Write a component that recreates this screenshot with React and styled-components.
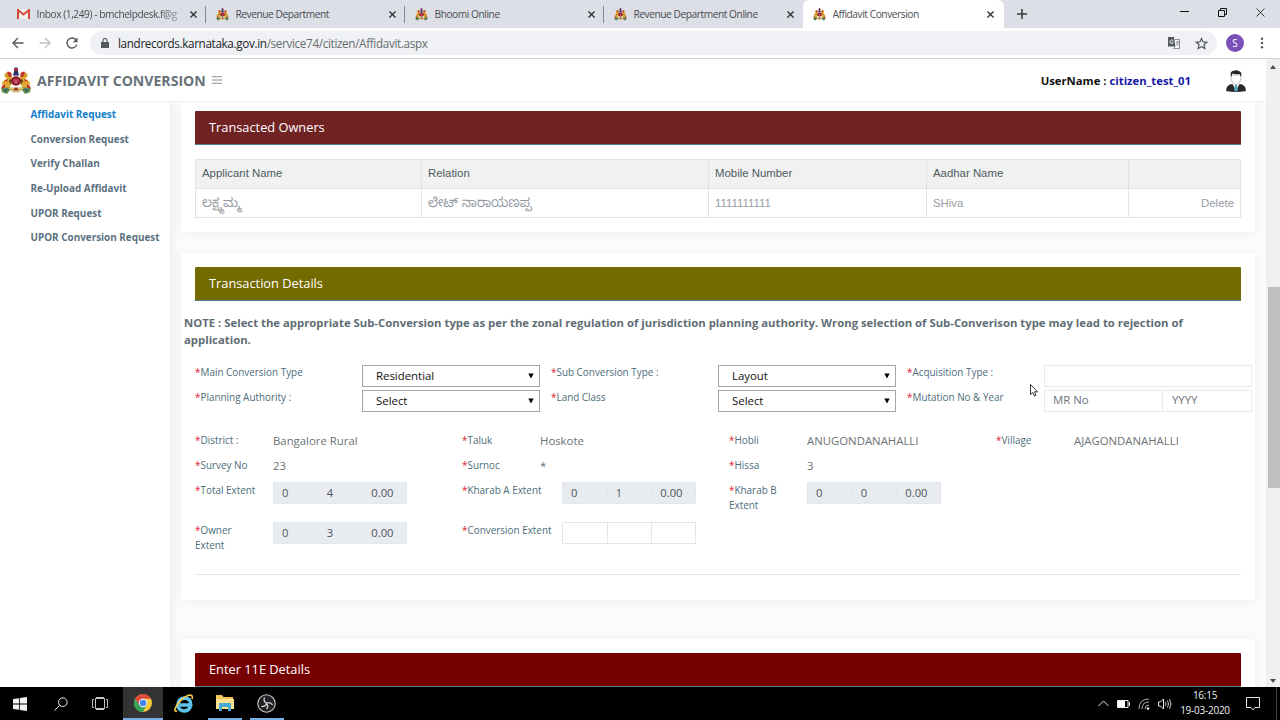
import styled, { createGlobalStyle } from "styled-components";

const GlobalStyle = createGlobalStyle`
  * {
    box-sizing: border-box;
  }
  body {
    margin: 0;
    overflow: hidden;
    font-family: "Open Sans", "Noto Sans", sans-serif;
  }
`;

const tabs = [
  { title: "Inbox (1,249) - bmchelpdesk.f@g", icon: "mail", fade: true },
  { title: "Revenue Department" },
  { title: "Bhoomi Online" },
  { title: "Revenue Department Online", last: true },
  { title: "Affidavit Conversion", active: true },
];

const menu = [
  "Affidavit Request",
  "Conversion Request",
  "Verify Challan",
  "Re-Upload Affidavit",
  "UPOR Request",
  "UPOR Conversion Request",
];

function Emblem({ width, height }) {
  return (
    <svg width={width} height={height} viewBox="0 0 32 30" preserveAspectRatio="none">
      <path d="M1 22L6 20L16 24L26 20L31 22L30 27L25 29L22 25L10 25L7 29L2 27Z" fill="#6b8a4e" />
      <path d="M3 24L8 23L6 27ZM29 24L24 23L26 27Z" fill="#1d6f6c" />
      <path d="M6 6L4 9L7 13L3 15L1 19L5 18L4 22L9 22L12 18L12 11L9 6Z" fill="#dfa92f" />
      <path d="M26 6L28 9L25 13L29 15L31 19L27 18L28 22L23 22L20 18L20 11L23 6Z" fill="#dfa92f" />
      <path d="M7 5L10 5L12 8L11 11L8 10ZM4 14L8 13L7 16ZM2 20L5 18L5 22L2 23Z" fill="#c23a2c" />
      <path d="M25 5L22 5L20 8L21 11L24 10ZM28 14L24 13L25 16ZM30 20L27 18L27 22L30 23Z" fill="#c23a2c" />
      <path d="M11 12L9 15L11 19ZM21 12L23 15L21 19Z" fill="#4a4420" />
      <circle cx="16" cy="15" r="5" fill="#8f1a2e" />
      <path d="M13.5 13H18.5V16L16 19L13.5 16Z" fill="#c64c5f" />
      <path d="M14 2L16 0L18 2V5L19 9H13L14 5Z" fill="#2a3260" />
      <path d="M14 1.5H18V4H14Z" fill="#b9322f" />
      <path d="M9 22H14L16 23L18 22H23V24H9Z" fill="#ecc75c" />
      <path d="M12 25H20V27H12Z" fill="#d5b06a" />
      <path d="M14 22H18V25H14Z" fill="#9c3a31" />
    </svg>
  );
}

function MailIcon() {
  return (
    <svg width="13" height="10" viewBox="0 0 13 10">
      <path d="M0 1Q0 0 1 0H12Q13 0 13 1V10H0Z" fill="#f1eeee" />
      <path d="M1 10V1L6.5 5.5L12 1V10" fill="none" stroke="#d5483b" strokeWidth="2" />
    </svg>
  );
}

function Cross({ size = 7, color = "#2d3035", weight = 1.5 }) {
  return (
    <svg width={size} height={size} viewBox="0 0 8 8">
      <path d="M.5 .5L7.5 7.5M7.5 .5L.5 7.5" stroke={color} strokeWidth={weight} />
    </svg>
  );
}

function Browser() {
  return (
    <>
      <TabStrip>
        {tabs.map((tab) => (
          <Tab key={tab.title} $active={tab.active} $line={!tab.active && !tab.last}>
            {tab.icon ? <MailIcon /> : <Emblem width={13} height={13} />}
            <TabTitle $fade={tab.fade}>{tab.title}</TabTitle>
            <Cross />
          </Tab>
        ))}
        <NewTab>
          <svg width="10" height="10" viewBox="0 0 10 10">
            <path d="M5 0V10M0 5H10" stroke="#34373b" strokeWidth="1.5" />
          </svg>
        </NewTab>
        <WindowButtons>
          <svg width="9" height="9" viewBox="0 0 9 9">
            <path d="M0 3.5H9" stroke="#111" />
          </svg>
          <svg width="9" height="9" viewBox="0 0 9 9">
            <path d="M.5 2.5H6.5V8.5H.5ZM2.5 2V.5H8.5V6.5H7" fill="none" stroke="#111" />
          </svg>
          <Cross size={9} color="#222" weight={0.8} />
        </WindowButtons>
      </TabStrip>
      <Toolbar>
        <NavIcons>
          <svg width="12" height="12" viewBox="0 0 12 12">
            <path d="M11.5 6H1.5M6 1L1 6L6 11" fill="none" stroke="#55585d" strokeWidth="1.4" />
          </svg>
          <svg width="12" height="12" viewBox="0 0 12 12">
            <path d="M.5 6H10.5M6 1L11 6L6 11" fill="none" stroke="#bfc1c4" strokeWidth="1.4" />
          </svg>
          <svg width="12" height="12" viewBox="0 0 12 12">
            <path d="M10.2 3.2A5 5 0 1 0 10.8 7.6" fill="none" stroke="#55585d" strokeWidth="1.4" />
            <path d="M11.5 .3V5.2H6.8Z" fill="#55585d" />
          </svg>
        </NavIcons>
        <AddressBar>
          <svg width="8" height="10" viewBox="0 0 8 10">
            <path d="M0 4H8V10H0Z" fill="#55585d" />
            <path d="M2 4V2.5A2 2 0 0 1 6 2.5V4" fill="none" stroke="#55585d" strokeWidth="1.1" />
          </svg>
          <Url>
            landrecords.karnataka.gov.in<span>/service74/citizen/Affidavit.aspx</span>
          </Url>
          <svg width="12" height="12" viewBox="0 0 12 12">
            <path d="M0 0H6L7.5 9.5H0Z" fill="#55585d" />
            <path d="M7 2.5H11.5V11.5H5.5L7.5 9.5" fill="#f6f7f8" stroke="#74777b" strokeWidth=".8" />
            <path d="M5 3.5A1.8 1.8 0 1 0 5 6V5H3.5" fill="none" stroke="#fff" strokeWidth=".8" />
            <path d="M8 5H11M9.5 4V5M10.5 5Q10 7 8 8.5M8.5 6L10.5 8.5" fill="none" stroke="#74777b" strokeWidth=".7" />
          </svg>
          <svg width="13" height="13" viewBox="0 0 24 24">
            <path
              d="M12 2.5L14.8 9L22 9.6L16.5 14.3L18.2 21.3L12 17.6L5.8 21.3L7.5 14.3L2 9.6L9.2 9Z"
              fill="none"
              stroke="#4b4e53"
              strokeWidth="2"
            />
          </svg>
        </AddressBar>
        <Avatar>S</Avatar>
        <svg width="4" height="12" viewBox="0 0 4 12">
          <circle cx="2" cy="1.7" r="1.2" fill="#55585d" />
          <circle cx="2" cy="6" r="1.2" fill="#55585d" />
          <circle cx="2" cy="10.3" r="1.2" fill="#55585d" />
        </svg>
      </Toolbar>
    </>
  );
}

function SiteHeader() {
  return (
    <Header>
      <Emblem width={32} height={28} />
      <Brand>AFFIDAVIT CONVERSION</Brand>
      <MenuIcon width="10" height="8" viewBox="0 0 10 8">
        <path d="M0 .7H10M0 4H10M0 7.3H10" stroke="#7c8b92" strokeWidth=".9" />
      </MenuIcon>
      <UserName>
        UserName : <span>citizen_test_01</span>
      </UserName>
      <svg width="20" height="22" viewBox="0 0 20 22">
        <path d="M0 21Q0 15 6 14L10 16L14 14Q20 15 20 21Q10 23 0 21Z" fill="#29292b" />
        <path d="M6.5 13.5L10 21.5L13.5 13.5Z" fill="#fff" />
        <path d="M9 15H11L12 20L10 22L8 20Z" fill="#4ea3b5" />
        <path d="M5.2 5V8.5Q6 14 10 14.5Q14 14 14.8 8.5V5Z" fill="#fff" stroke="#888" strokeWidth=".5" />
        <path d="M5 7Q3.5 1 8 .8Q10 -.6 13 1Q16.5 2 15 7L13.8 4Q9 4.5 6.5 3.6Z" fill="#222" />
      </svg>
    </Header>
  );
}

function Label({ children, nowrap }) {
  return (
    <LabelText $nowrap={nowrap}>
      <i>*</i>
      {children}
    </LabelText>
  );
}

function Extent({ values = ["", "", ""], disabled }) {
  return (
    <ExtentGroup>
      {values.map((value, index) => (
        <ExtentBox key={index} $disabled={disabled}>
          {value}
        </ExtentBox>
      ))}
    </ExtentGroup>
  );
}

function Select({ children }) {
  return (
    <SelectBox>
      {children}
      <svg width="6" height="6" viewBox="0 0 6 6">
        <path d="M.3 .5H5.7L3 5.5Z" fill="#000" />
      </svg>
    </SelectBox>
  );
}

function Owners() {
  return (
    <Card $height={130} $top={9}>
      <Bar $color="#712324">Transacted Owners</Bar>
      <Table>
        <thead>
          <tr>
            <th>Applicant Name</th>
            <th>Relation</th>
            <th>Mobile Number</th>
            <th>Aadhar Name</th>
            <th></th>
          </tr>
        </thead>
        <tbody>
          <tr>
            <Kannada>ಲಕ್ಷ್ಮಮ್ಮ</Kannada>
            <Kannada>ಲೇಟ್ ನಾರಾಯಣಪ್ಪ</Kannada>
            <td>1111111111</td>
            <td>SHiva</td>
            <td>Delete</td>
          </tr>
        </tbody>
      </Table>
    </Card>
  );
}

function Transaction() {
  return (
    <Card $height={347} $top={14}>
      <Bar $color="#736a00">Transaction Details</Bar>
      <Note>
        NOTE : Select the appropriate Sub-Conversion type as per the zonal regulation of jurisdiction planning
        authority. Wrong selection of Sub-Converison type may lead to rejection of application.
      </Note>
      <TypeGrid>
        <Label>Main Conversion Type</Label>
        <Select>Residential</Select>
        <Label>Sub Conversion Type :</Label>
        <Select>Layout</Select>
        <Label>Acquisition Type :</Label>
        <Field />
        <Label>Planning Authority :</Label>
        <Select>Select</Select>
        <Label>Land Class</Label>
        <Select>Select</Select>
        <Label>Mutation No &amp; Year</Label>
        <FieldPair>
          <Field>MR No</Field>
          <Field>YYYY</Field>
        </FieldPair>
      </TypeGrid>
      <LandGrid>
        <Label>District :</Label>
        <Value>Bangalore Rural</Value>
        <Label>Taluk</Label>
        <Value>Hoskote</Value>
        <Label>Hobli</Label>
        <Value>ANUGONDANAHALLI</Value>
        <Label>Village</Label>
        <Value>AJAGONDANAHALLI</Value>
        <Label>Survey No</Label>
        <Value>23</Value>
        <Label>Surnoc</Label>
        <Value>*</Value>
        <Label>Hissa</Label>
        <Value>3</Value>
      </LandGrid>
      <ExtentGrid>
        <Label nowrap>Total Extent</Label>
        <Extent values={["0", "4", "0.00"]} disabled />
        <Label nowrap>Kharab A Extent</Label>
        <Extent values={["0", "1", "0.00"]} disabled />
        <Label>Kharab B Extent</Label>
        <Extent values={["0", "0", "0.00"]} disabled />
        <Label>Owner Extent</Label>
        <Extent values={["0", "3", "0.00"]} disabled />
        <Label nowrap>Conversion Extent</Label>
        <Extent />
      </ExtentGrid>
      <Divider />
    </Card>
  );
}

function Taskbar() {
  return (
    <TaskbarRow>
      <TaskButton $width={40}>
        <svg width="14" height="14" viewBox="0 0 14 14">
          <path d="M0 2L6.2 1.2V6.6H0ZM7 1.1L14 0V6.6H7ZM0 7.4H6.2V12.8L0 12ZM7 7.4H14V14L7 12.9Z" fill="#f3f3f3" />
        </svg>
      </TaskButton>
      <TaskButton $width={41}>
        <svg width="14" height="14" viewBox="0 0 14 14">
          <circle cx="8.8" cy="5.2" r="4.3" fill="none" stroke="#eee" />
          <path d="M5.7 8.3L.5 13.5" stroke="#eee" />
        </svg>
      </TaskButton>
      <TaskButton $width={38}>
        <svg width="16" height="13" viewBox="0 0 16 13">
          <path
            d="M3.5 1.5H12.5V11.5H3.5ZM2 2.5H.5V10.5H2M14 2.5H15.5V10.5H14M4 .5H12M4 12.5H12"
            fill="none"
            stroke="#ddd"
            strokeWidth=".9"
          />
        </svg>
      </TaskButton>
      <TaskButton $width={47}>
        <Running $width={40} $active>
          <svg width="18" height="18" viewBox="0 0 18 18">
            <circle cx="9" cy="9" r="9" fill="#f7c93c" />
            <path d="M1.2 4.5A9 9 0 0 0 9 18L12.5 11L5.5 11Z" fill="#35a25a" />
            <path d="M9 4.8H16.95A9 9 0 0 0 1.2 4.5L5.3 11Z" fill="#dc4a3d" />
            <circle cx="9" cy="9" r="4.2" fill="#fff" />
            <circle cx="9" cy="9" r="3.3" fill="#4583eb" />
          </svg>
        </Running>
      </TaskButton>
      <TaskButton $width={36}>
        <svg width="20" height="19" viewBox="0 0 20 19">
          <path
            d="M16.5 12.5Q14.5 17 10 17Q4 16.5 4 10.5Q4.5 4.5 10.5 4Q17 4.5 16.8 11H6"
            fill="none"
            stroke="#5ec4ee"
            strokeWidth="3.4"
          />
          <path d="M3 17Q-1 18 2.5 12Q7 4 14 1.5Q19.5 0 18 5" fill="none" stroke="#f2cf46" strokeWidth="1.6" />
        </svg>
      </TaskButton>
      <TaskButton $width={46}>
        <Running $width={34}>
          <svg width="18" height="16" viewBox="0 0 18 16">
            <path d="M0 0H6L7.5 2H17V14H0Z" fill="#f0c65a" />
            <path d="M0 4H18V14H0Z" fill="#fce28e" />
            <path d="M3 8H15V16H12V12H6V16H3Z" fill="#48a9d5" />
          </svg>
        </Running>
      </TaskButton>
      <TaskButton $width={37}>
        <Running $width={34}>
          <svg width="19" height="19" viewBox="0 0 19 19">
            <circle cx="9.5" cy="9.5" r="8.7" fill="#202124" stroke="#ccc" strokeWidth="1.1" />
            <path
              d="M7.5 3.5Q6 7 9.5 9.3Q9 12.5 4.5 12.5M9.5 9.3Q13.5 7.5 15.5 11M9.5 9.3Q12 12.5 9.5 15"
              fill="none"
              stroke="#d6d6d6"
              strokeWidth="1.3"
            />
          </svg>
        </Running>
      </TaskButton>
      <Tray>
        <svg width="11" height="7" viewBox="0 0 11 7">
          <path d="M.5 6L5.5 1L10.5 6" fill="none" stroke="#eee" />
        </svg>
        <svg width="13" height="8" viewBox="0 0 13 8">
          <path d="M.5 .5H11V7.5H.5ZM11.5 2.5H12.5V5.5H11.5" fill="none" stroke="#eee" />
          <path d="M1 1H8V7H1Z" fill="#fff" />
        </svg>
        <svg width="12" height="12" viewBox="0 0 12 12">
          <path d="M1 11Q1 1 11 1M4 11Q4 4 11 4M7 11Q7 7 11 7" fill="none" stroke="#aaa" />
          <circle cx="10" cy="10.5" r="1.2" fill="#fff" />
        </svg>
        <svg width="14" height="12" viewBox="0 0 14 12">
          <path d="M.5 4H2.5L5.5 1V11L2.5 8H.5Z" fill="none" stroke="#eee" />
          <path
            d="M7.5 4Q8.5 6 7.5 8M9.5 2.5Q11.5 6 9.5 9.5M11.5 1Q14.5 6 11.5 11"
            fill="none"
            stroke="#ddd"
            strokeWidth=".9"
          />
        </svg>
        <Clock>
          <span>16:15</span>
          <span>19-03-2020</span>
        </Clock>
        <svg width="14" height="14" viewBox="0 0 14 14">
          <path d="M.5 .5H13.5V10.5H9L7 12.8L5 10.5H.5Z" fill="none" stroke="#e5e5e5" />
        </svg>
      </Tray>
    </TaskbarRow>
  );
}

export default function App() {
  return (
    <Screen>
      <GlobalStyle />
      <Browser />
      <Viewport>
        <Site>
          <SiteHeader />
          <Body>
            <Sidebar>
              {menu.map((item, index) => (
                <MenuItem key={item} $active={index === 0}>
                  {item}
                </MenuItem>
              ))}
            </Sidebar>
            <Content>
              <Owners />
              <Gap $height={21} />
              <Transaction />
              <Gap $height={39} />
              <Card $height={60} $top={14}>
                <Bar $color="#760000">Enter 11E Details</Bar>
              </Card>
            </Content>
          </Body>
        </Site>
        <Scrollbar>
          <svg width="6" height="4" viewBox="0 0 6 4">
            <path d="M0 4L3 0L6 4Z" fill="#4c4c4c" />
          </svg>
          <Thumb />
          <svg width="6" height="4" viewBox="0 0 6 4">
            <path d="M0 0L3 4L6 0Z" fill="#4c4c4c" />
          </svg>
        </Scrollbar>
      </Viewport>
      <Taskbar />
      <Pointer width="8" height="13" viewBox="0 0 8 13">
        <path d="M.5 .5V10.5L2.8 8.4L4.4 12L6 11.3L4.5 7.8H7.5Z" fill="#fff" stroke="#222" strokeWidth=".9" />
      </Pointer>
    </Screen>
  );
}

const Screen = styled.div`
  position: relative;
  display: flex;
  flex-direction: column;
  width: 1280px;
  height: 720px;
  overflow: hidden;
  background: #fff;
`;

const TabStrip = styled.div`
  display: flex;
  height: 28px;
  padding-left: 7px;
  background: #dcdfe6;
`;

const Tab = styled.div`
  display: flex;
  align-items: center;
  width: ${(props) => (props.$active ? "201px" : "199px")};
  padding: 0 ${(props) => (props.$active ? "9px" : "8px")} 0 10px;
  border-right: 1px solid transparent;
  border-image: ${(props) =>
    props.$line ? "linear-gradient(transparent 22%, #85888e 22%, #85888e 80%, transparent 80%) 1" : "none"};
  border-radius: ${(props) => (props.$active ? "6px 6px 0 0" : "0")};
  background: ${(props) => (props.$active ? "#fff" : "transparent")};

  svg {
    flex: none;
  }
`;

const TabTitle = styled.div`
  flex: 1;
  margin: 0 4px 1px 6.5px;
  overflow: hidden;
  white-space: nowrap;
  font-size: 10.2px;
  letter-spacing: -0.45px;
  color: #4a4d52;
  mask-image: ${(props) => (props.$fade ? "linear-gradient(90deg, #000 85%, transparent)" : "none")};
`;

const NewTab = styled.div`
  display: flex;
  align-items: center;
  margin-left: 13px;
`;

const WindowButtons = styled.div`
  display: flex;
  align-items: center;
  gap: 29px;
  margin: 0 15px 3px auto;
`;

const Toolbar = styled.div`
  display: flex;
  align-items: center;
  height: 31px;
  padding-right: 16px;
  border-bottom: 1px solid #d0d2d4;
  background: #fff;
`;

const NavIcons = styled.div`
  display: flex;
  gap: 15px;
  width: 90px;
  padding-left: 12px;
`;

const AddressBar = styled.div`
  display: flex;
  align-items: center;
  gap: 15px;
  width: 1127px;
  height: 24px;
  padding: 0 9px 0 11px;
  border-radius: 12px;
  background: #eff1f4;
`;

const Url = styled.div`
  flex: 1;
  margin: 0 0 1px -6px;
  font-size: 11.7px;
  letter-spacing: -0.34px;
  color: #222529;

  span {
    color: #686c70;
  }
`;

const Avatar = styled.div`
  display: flex;
  align-items: center;
  justify-content: center;
  width: 18px;
  height: 18px;
  margin: 0 auto 0 9px;
  border-radius: 50%;
  font-size: 10px;
  color: #fff;
  background: #7950b8;
`;

const Viewport = styled.div`
  display: flex;
  height: 628px;
`;

const Site = styled.div`
  display: flex;
  flex-direction: column;
  width: 1266px;
`;

const Header = styled.header`
  display: flex;
  align-items: center;
  height: 43px;
  padding: 2px 20px 0 0;
  border-bottom: 1px solid #f0f0f0;
  background: #fff;
`;

const Brand = styled.h1`
  margin: 0 6px 1px 5px;
  font-size: 14.1px;
  font-weight: 700;
  color: #667278;
`;

const MenuIcon = styled.svg`
  margin-bottom: 2px;
`;

const UserName = styled.div`
  margin: 0 35px 2px auto;
  font-size: 11.3px;
  font-weight: 700;
  color: #111;

  span {
    color: #1717aa;
  }
`;

const Body = styled.div`
  display: flex;
  height: 585px;
  overflow: hidden;
`;

const Sidebar = styled.nav`
  position: relative;
  width: 170px;
  padding: 0 0 0 30.5px;
  background: #fff;
  box-shadow: 1px 0 10px rgba(0, 0, 0, 0.07);
`;

const MenuItem = styled.div`
  height: 24.7px;
  line-height: 24.7px;
  font-size: 9.92px;
  font-weight: 700;
  white-space: nowrap;
  color: ${(props) => (props.$active ? "#1380cb" : "#5b7180")};
`;

const Content = styled.main`
  width: 1096px;
  padding: 0 11px;
  background: #fbfbfb;
`;

const Card = styled.section`
  height: ${(props) => props.$height}px;
  padding: ${(props) => props.$top}px 14px 0;
  overflow: hidden;
  background: #fff;
  box-shadow: 0 1px 12px rgba(0, 0, 0, 0.05);
`;

const Gap = styled.div`
  height: ${(props) => props.$height}px;
`;

const Bar = styled.h2`
  height: 34px;
  margin: 0;
  padding-left: 14px;
  border-bottom: 1px solid #4f7f91;
  border-radius: 1px 1px 0 0;
  line-height: 33px;
  font-size: 12.8px;
  font-weight: 400;
  color: #fff;
  background: ${(props) => props.$color};
`;

const Table = styled.table`
  width: 1046px;
  margin-top: 14px;
  border-collapse: collapse;
  table-layout: fixed;
  font-family: "Liberation Sans", Arial, sans-serif;
  font-size: 11.4px;

  th,
  td {
    height: 29px;
    padding: 0 6px 1px;
    border: 1px solid #e1e3e8;
    text-align: left;
    color: #969ca4;
  }
  th {
    padding-bottom: 2px;
    font-weight: 400;
    color: #4c5c60;
    background: #f1f1f1;
  }
  th:nth-child(1) {
    width: 226px;
  }
  th:nth-child(2) {
    width: 287px;
  }
  th:nth-child(3) {
    width: 218px;
  }
  th:nth-child(4) {
    width: 202px;
  }
  td:last-child {
    text-align: right;
  }
`;

const Kannada = styled.td`
  && {
    padding-top: 3px;
    padding-bottom: 0;
  }
  font-family: "Noto Sans Kannada", "Noto Sans", sans-serif;
  font-size: 13px;
  line-height: 14px;
  white-space: nowrap;
`;

const Note = styled.p`
  margin: 13px -11px 0;
  padding-right: 40px;
  line-height: 17px;
  font-size: 11.34px;
  font-weight: 700;
  color: #5f6d74;
`;

const LabelText = styled.div`
  padding: 0 11px;
  line-height: 15px;
  font-size: 9.92px;
  white-space: ${(props) => (props.$nowrap ? "nowrap" : "normal")};
  color: #4d6c7b;

  i {
    font-style: normal;
    color: #e0232e;
  }
`;

const TypeGrid = styled.div`
  display: grid;
  grid-template-columns: 178px 178px 178px 178px 148px 208px;
  grid-auto-rows: 22px;
  row-gap: 3.4px;
  margin: 16.6px -11px 0;
`;

const SelectBox = styled.div`
  display: flex;
  align-items: center;
  justify-content: space-between;
  padding: 0 5px 0 13px;
  border: 1px solid #a5a5a5;
  font-size: 11.4px;
  color: #111;
  background: #fff;
`;

const Field = styled.div`
  display: flex;
  align-items: center;
  padding: 0 0 2px 8px;
  border: 1px solid #e8eaec;
  font-size: 11.4px;
  color: #6c757b;
  background: #fff;
`;

const FieldPair = styled.div`
  display: grid;
  grid-template-columns: 119px 89px;

  > :last-child {
    padding-left: 9px;
    border-left: 0;
  }
`;

const LandGrid = styled.div`
  display: grid;
  grid-template-columns: repeat(4, 89px 178px);
  grid-auto-rows: 25px;
  margin: 21px -11px 0;
`;

const Value = styled.div`
  line-height: 15px;
  font-size: 11.37px;
  color: #6b7276;
`;

const ExtentGrid = styled.div`
  display: grid;
  grid-template-columns: 89px 178px 111px 156px 89px 178px;
  grid-auto-rows: 40px;
  margin: -1px -11px 0;

  ${LabelText} {
    padding-top: 1px;
  }
`;

const ExtentGroup = styled.div`
  display: grid;
  grid-template-columns: repeat(3, 1fr);
  width: 134px;
  height: 22px;
`;

const ExtentBox = styled.div`
  display: flex;
  align-items: center;
  padding: 0 0 1px 8px;
  border: 1px solid ${(props) => (props.$disabled ? "#e3e6ea" : "#e4e6e9")};
  border-right-width: 0;
  font-size: 11.2px;
  color: #4c565e;
  background: ${(props) => (props.$disabled ? "#e8ebf0" : "#fff")};

  &:last-child {
    border-right-width: 1px;
  }
`;

const Divider = styled.hr`
  height: 1px;
  margin: 12px 0 0;
  border: 0;
  background: #e0e2e3;
`;

const Scrollbar = styled.div`
  display: flex;
  flex-direction: column;
  align-items: center;
  width: 14px;
  padding: 6px 0 4px;
  background: #f0f0f0;
`;

const Thumb = styled.div`
  width: 12px;
  height: 201px;
  margin: 218px 0 auto 1px;
  background: #bfbfbf;
`;

const TaskbarRow = styled.footer`
  display: flex;
  height: 33px;
  background: #000;
`;

const TaskButton = styled.div`
  display: flex;
  align-items: center;
  justify-content: center;
  width: ${(props) => props.$width}px;
`;

const Running = styled.div`
  display: flex;
  align-items: center;
  justify-content: center;
  width: ${(props) => props.$width}px;
  height: 33px;
  padding-top: 1px;
  border-bottom: 2px solid #76b0e6;
  background: ${(props) => (props.$active ? "#333" : "transparent")};
`;

const Tray = styled.div`
  display: flex;
  align-items: center;
  gap: 8px;
  margin-left: auto;
  margin-right: 3px;
  padding-right: 16px;
  border-right: 1px solid #444;
`;

const Clock = styled.div`
  display: flex;
  flex-direction: column;
  align-items: center;
  width: 52px;
  margin: 0 7px 1px -1px;
  line-height: 15px;
  font-size: 10px;
  letter-spacing: -0.25px;
  white-space: nowrap;
  color: #eee;
`;

const Pointer = styled.svg`
  position: absolute;
  top: 384px;
  left: 1030px;
`;
